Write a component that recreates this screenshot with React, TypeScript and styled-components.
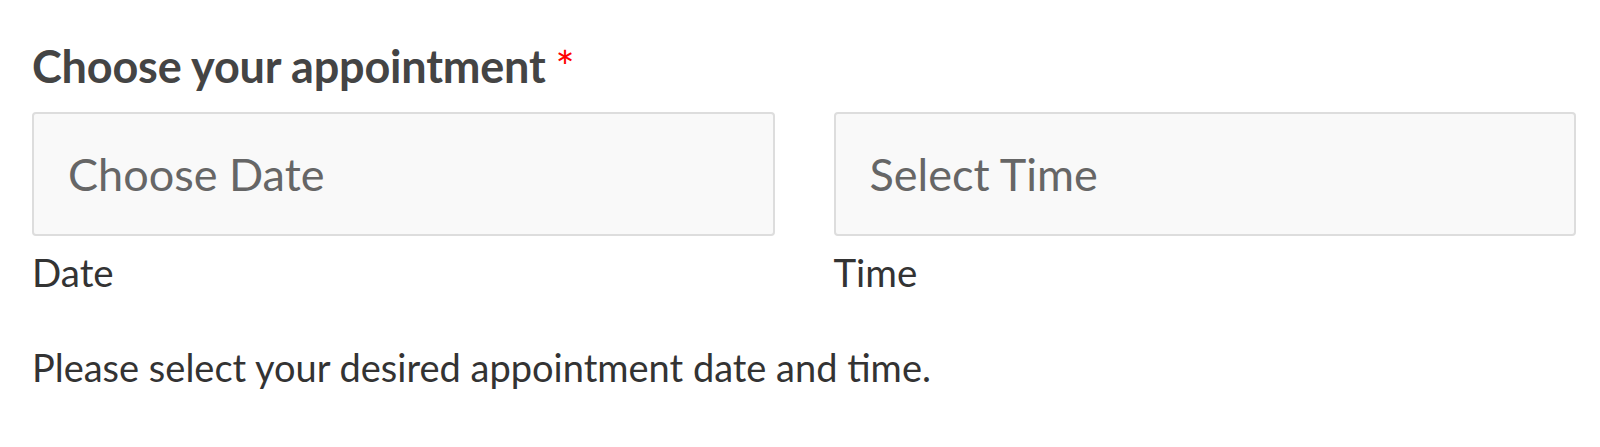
import styled, { createGlobalStyle } from "styled-components";

const GlobalStyle = createGlobalStyle`
  html, body {
    margin: 0;
    padding: 0;
    background: #ffffff;
  }
  body {
    font-family: Lato, "Liberation Sans", sans-serif;
  }
`;

//#region --- Form styles ---
const Form = styled.form`
  width: 1600px;
  box-sizing: border-box;
  padding: 37px 24px 0 32px;
`;

const Heading = styled.div`
  font-size: 45px;
  font-weight: 700;
  color: #444444;
  line-height: 58px;
  letter-spacing: -0.2px;
  margin-bottom: 17px;
`;

const Required = styled.span`
  color: #ff0000;
  font-weight: 400;
  margin-left: 10px;
`;

const Row = styled.div`
  display: grid;
  grid-template-columns: 1fr 1fr;
  column-gap: 59px;
`;

const Field = styled.div`
  display: flex;
  flex-direction: column;
`;

const Input = styled.input`
  box-sizing: border-box;
  height: 124px;
  width: 100%;
  padding: 0 34px;
  border: 2px solid #dddddd;
  border-radius: 4px;
  background: #f9f9f9;
  font-family: Lato, "Liberation Sans", sans-serif;
  font-size: 45px;
  color: #333333;
  outline: none;
  &::placeholder {
    color: #666666;
  }
`;

const SubLabel = styled.label`
  font-size: 38.5px;
  color: #333333;
  line-height: 48px;
  margin-top: 12px;
`;

const Description = styled.p`
  margin: 46px 0 0;
  font-size: 38px;
  color: #333333;
  line-height: 50px;
`;
//#endregion

const fields = [
  { id: "date", placeholder: "Choose Date", label: "Date" },
  { id: "time", placeholder: "Select Time", label: "Time" },
];

const App = () => {
  return (
    <>
      <GlobalStyle />
      <Form onSubmit={(e) => e.preventDefault()}>
        <Heading>
          Choose your appointment<Required>*</Required>
        </Heading>
        <Row>
          {fields.map((field) => (
            <Field key={field.id}>
              <Input id={field.id} placeholder={field.placeholder} />
              <SubLabel htmlFor={field.id}>{field.label}</SubLabel>
            </Field>
          ))}
        </Row>
        <Description>
          Please select your desired appointment date and time.
        </Description>
      </Form>
    </>
  );
};

export default App;
